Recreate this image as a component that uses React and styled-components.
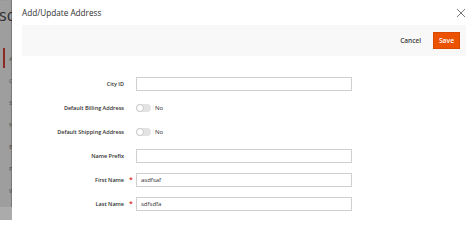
import React, { useState } from "react";
import styled, { createGlobalStyle } from "styled-components";

const GlobalStyle = createGlobalStyle`
    body {
        margin: 0;
        background: #ffffff;
        font-family: "Open Sans", "Liberation Sans", sans-serif;
        color: #303030;
    }
`;

const navItems = ["Account", "Customer", "Send", "Newsletter", "Billing", "Product", "Wishlist"];

const fields = [
    { label: "City ID", type: "text", value: "" },
    { label: "Default Billing Address", type: "toggle" },
    { label: "Default Shipping Address", type: "toggle" },
    { label: "Name Prefix", type: "text", value: "" },
    { label: "First Name", type: "text", value: "asdfsaf", required: true },
    { label: "Last Name", type: "text", value: "sdfsdfa", required: true },
];

const App = () => {
    const [values, setValues] = useState(() => fields.map((f) => f.value || ""));

    const onChange = (index) => (event) => {
        const next = [...values];
        next[index] = event.target.value;
        setValues(next);
    };

    return (
        <>
            <GlobalStyle />
            <Page>
                <Backdrop>
                    <BackdropInner>
                        <CustomerTitle>sd</CustomerTitle>
                        <NavList>
                            {navItems.map((item, i) => (
                                <NavItem key={item} active={i === 0}>{item}</NavItem>
                            ))}
                        </NavList>
                    </BackdropInner>
                    <BackdropFooter />
                </Backdrop>

                <Modal>
                    <ModalHeader>
                        <ModalTitle>Add/Update Address</ModalTitle>
                        <CloseButton aria-label="Close">
                            <svg width="10" height="10" viewBox="0 0 10 10">
                                <path d="M1 1 L9 9 M9 1 L1 9" stroke="#7a7a7a" strokeWidth="1" fill="none" />
                            </svg>
                        </CloseButton>
                    </ModalHeader>

                    <ActionBar>
                        <CancelButton>Cancel</CancelButton>
                        <SaveButton>Save</SaveButton>
                    </ActionBar>

                    <Form>
                        {fields.map((field, i) => (
                            <FieldRow key={field.label}>
                                <Label>{field.label}</Label>
                                <Required>{field.required ? "*" : ""}</Required>
                                {field.type === "toggle" ? (
                                    <ToggleWrap>
                                        <Toggle>
                                            <Knob />
                                        </Toggle>
                                        <ToggleText>No</ToggleText>
                                    </ToggleWrap>
                                ) : (
                                    <TextInput value={values[i]} onChange={onChange(i)} />
                                )}
                            </FieldRow>
                        ))}
                    </Form>
                </Modal>
            </Page>
        </>
    );
};

const Page = styled.div`
    display: flex;
    flex-direction: row;
    width: 474px;
    height: 220px;
    overflow: hidden;
`;

const Backdrop = styled.div`
    width: 12px;
    flex-shrink: 0;
    display: flex;
    flex-direction: column;
    background-color: #9e9e9e;
    overflow: hidden;
    box-shadow: inset -1px 0 1px rgba(0, 0, 0, 0.25);
`;

const BackdropInner = styled.div`
    flex: 1;
    margin-left: -1px;
    width: 60px;
`;

const CustomerTitle = styled.div`
    font-size: 16px;
    line-height: 20px;
    color: #2e2e2e;
    padding-top: 5px;
    white-space: nowrap;
`;

const NavList = styled.div`
    display: flex;
    flex-direction: column;
    margin-top: 29px;
    gap: 12px;
`;

const NavItem = styled.div`
    position: relative;
    font-size: 6px;
    line-height: 10px;
    padding-left: 10px;
    color: #4a4a4a;
    white-space: nowrap;

    &::before {
        content: "";
        display: ${(p) => (p.active ? "block" : "none")};
        position: absolute;
        left: 4px;
        top: -6px;
        width: 2px;
        height: 20px;
        background: #8a2a22;
    }
`;

const BackdropFooter = styled.div`
    height: 13px;
    background-color: #ababab;
`;

const Modal = styled.div`
    flex: 1;
    display: flex;
    flex-direction: column;
    background: #ffffff;
    padding: 0 8px 0 10px;
`;

const ModalHeader = styled.div`
    height: 25px;
    display: flex;
    flex-direction: row;
    justify-content: space-between;
    align-items: center;
`;

const ModalTitle = styled.h1`
    margin: 0;
    font-size: 8.2px;
    font-weight: 400;
    color: #303030;
    line-height: 12px;
`;

const CloseButton = styled.div`
    display: flex;
    align-items: center;
    justify-content: center;
    width: 10px;
    height: 10px;
    cursor: pointer;
`;

const ActionBar = styled.div`
    height: 31px;
    display: flex;
    flex-direction: row;
    justify-content: flex-end;
    align-items: center;
    background-color: #f8f8f8;
    padding-right: 6px;
    gap: 12px;
`;

const CancelButton = styled.div`
    font-size: 6.5px;
    font-weight: 600;
    color: #3d3d3d;
    cursor: pointer;
`;

const SaveButton = styled.div`
    width: 27px;
    height: 17px;
    display: flex;
    align-items: center;
    justify-content: center;
    background-color: #eb5202;
    border: 1px solid #d94a00;
    box-sizing: border-box;
    color: #ffffff;
    font-size: 6.8px;
    font-weight: 600;
    cursor: pointer;
`;

const Form = styled.div`
    display: flex;
    flex-direction: column;
    gap: 10px;
    padding-top: 21px;
`;

const FieldRow = styled.div`
    display: grid;
    grid-template-columns: 102px 12px 216px;
    align-items: center;
    height: 14px;
`;

const Label = styled.label`
    text-align: right;
    font-size: 5.5px;
    font-weight: 600;
    color: #303030;
    white-space: nowrap;
`;

const Required = styled.span`
    text-align: center;
    color: #e22626;
    font-size: 7px;
    font-weight: 600;
    padding-left: 2px;
    line-height: 8px;
`;

const TextInput = styled.input`
    box-sizing: border-box;
    width: 216px;
    height: 14px;
    border: 1px solid #cfcfcf;
    padding: 0 4px;
    font-family: "Open Sans", "Liberation Sans", sans-serif;
    font-size: 6px;
    color: #303030;
    outline: none;
`;

const ToggleWrap = styled.div`
    display: flex;
    flex-direction: row;
    align-items: center;
    gap: 4px;
`;

const Toggle = styled.div`
    width: 15px;
    height: 8px;
    border-radius: 4px;
    background-color: #e3e3e3;
    box-sizing: border-box;
    display: flex;
    align-items: center;
`;

const Knob = styled.div`
    width: 8px;
    height: 8px;
    border-radius: 50%;
    background: #ffffff;
    border: 1px solid #c8c8c8;
    box-sizing: border-box;
`;

const ToggleText = styled.span`
    font-size: 6px;
    color: #303030;
`;

export default App;
